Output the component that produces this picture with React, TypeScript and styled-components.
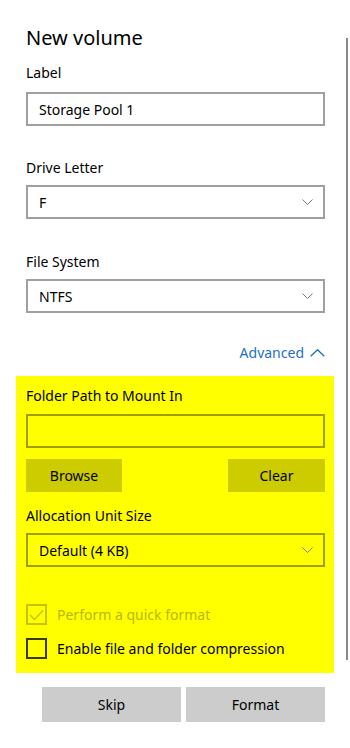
import * as React from 'react'
import styled, { createGlobalStyle } from 'styled-components'

const GlobalStyle = createGlobalStyle`
  html, body {
    margin: 0;
    padding: 0;
    background: #ffffff;
  }
  body {
    font-family: 'Noto Sans', 'Open Sans', sans-serif;
    color: #000;
  }
`

const Page = styled.div`
  position: relative;
  width: 350px;
  height: 748px;
  overflow: hidden;
  background: #fff;
`

const Scrollbar = styled.div`
  position: absolute;
  top: 38px;
  right: 2px;
  width: 2px;
  height: 622px;
  background: #8a8a8a;
`

const Content = styled.div`
  display: flex;
  flex-direction: column;
  padding: 24px 25px 0 26px;
`

const Title = styled.h1`
  margin: 0;
  font-size: 20px;
  font-weight: 400;
  line-height: 28px;
  height: 28px;
`

const FieldLabel = styled.div<{ top: number }>`
  margin-top: ${(p) => p.top}px;
  font-size: 14px;
  line-height: 20px;
`

const Box = styled.div<{ tinted?: boolean; top?: number }>`
  box-sizing: border-box;
  margin-top: ${(p) => p.top ?? 7}px;
  height: 34px;
  display: flex;
  align-items: center;
  justify-content: space-between;
  padding: 0 10px 0 11px;
  border: 2px solid ${(p) => (p.tinted ? '#9e9e00' : '#a0a0a0')};
  font-size: 14px;
  background: transparent;
`

const Chevron = () => (
  <svg width="11" height="6" viewBox="0 0 11 6">
    <path d="M0.5 0.5 L5.5 5.5 L10.5 0.5" fill="none" stroke="#7a7a7a" strokeWidth="1" />
  </svg>
)

const AdvancedRow = styled.div`
  margin-top: 30px;
  display: flex;
  justify-content: flex-end;
  align-items: center;
  gap: 6px;
  color: #1e6fc4;
  font-size: 14px;
  line-height: 20px;
`

const Advanced = styled.div`
  margin: 13px -9px 0 -10px;
  padding: 10px 9px 14px 10px;
  background: #ffff00;
  display: flex;
  flex-direction: column;
`

const ButtonRow = styled.div`
  margin-top: 11px;
  display: flex;
  justify-content: space-between;
`

const Button = styled.div<{ tinted?: boolean; width: number; height: number }>`
  width: ${(p) => p.width}px;
  height: ${(p) => p.height}px;
  display: flex;
  align-items: center;
  justify-content: center;
  font-size: 14px;
  background: ${(p) => (p.tinted ? '#cccc00' : '#cccccc')};
`

const CheckRow = styled.div<{ disabled?: boolean; top: number }>`
  margin-top: ${(p) => p.top}px;
  display: flex;
  align-items: center;
  gap: 10px;
  font-size: 14px;
  line-height: 21px;
  color: ${(p) => (p.disabled ? '#b8b800' : '#000')};
`

const CheckBox = styled.div<{ disabled?: boolean }>`
  box-sizing: border-box;
  width: 21px;
  height: 21px;
  border: 2px solid ${(p) => (p.disabled ? '#c4c400' : '#3a3a00')};
  display: flex;
  align-items: center;
  justify-content: center;
`

const Footer = styled.div`
  margin: 14px 0 0 16px;
  display: flex;
  gap: 5px;
`

export default function App() {
  return (
    <Page>
      <GlobalStyle />
      <Scrollbar />
      <Content>
        <Title>New volume</Title>
        <FieldLabel top={11}>Label</FieldLabel>
        <Box top={9}>Storage Pool 1</Box>
        <FieldLabel top={32}>Drive Letter</FieldLabel>
        <Box>
          F
          <Chevron />
        </Box>
        <FieldLabel top={33}>File System</FieldLabel>
        <Box>
          NTFS
          <Chevron />
        </Box>
        <AdvancedRow>
          Advanced
          <svg width="15" height="8" viewBox="0 0 15 8">
            <path d="M0.7 7.3 L7.5 0.7 L14.3 7.3" fill="none" stroke="#1e6fc4" strokeWidth="1.3" />
          </svg>
        </AdvancedRow>
        <Advanced>
          <FieldLabel top={0}>Folder Path to Mount In</FieldLabel>
          <Box tinted top={8} />
          <ButtonRow>
            <Button tinted width={96} height={33}>Browse</Button>
            <Button tinted width={97} height={33}>Clear</Button>
          </ButtonRow>
          <FieldLabel top={14}>Allocation Unit Size</FieldLabel>
          <Box tinted>
            Default (4 KB)
            <Chevron />
          </Box>
          <CheckRow disabled top={37}>
            <CheckBox disabled>
              <svg width="15" height="12" viewBox="0 0 15 12">
                <path d="M1 6 L5.5 10.5 L14 1.5" fill="none" stroke="#c4c400" strokeWidth="1.5" />
              </svg>
            </CheckBox>
            Perform a quick format
          </CheckRow>
          <CheckRow top={13}>
            <CheckBox />
            Enable file and folder compression
          </CheckRow>
        </Advanced>
        <Footer>
          <Button width={139} height={35}>Skip</Button>
          <Button width={139} height={35}>Format</Button>
        </Footer>
      </Content>
    </Page>
  )
}
